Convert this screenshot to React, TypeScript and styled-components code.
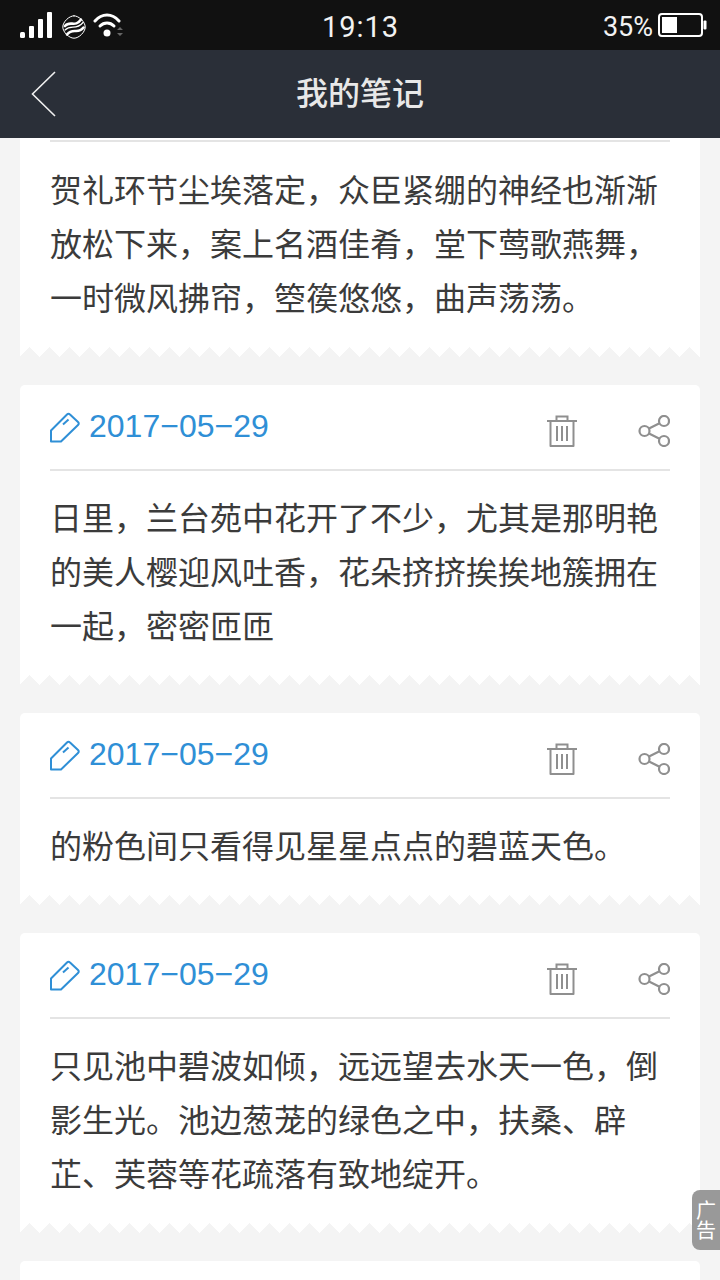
import React from 'react';
import styled, { createGlobalStyle } from 'styled-components';

const GlobalStyle = createGlobalStyle`
  html, body {
    margin: 0;
    padding: 0;
    background: #f4f4f4;
  }
`;

const Page = styled.div`
  position: relative;
  width: 720px;
  height: 1280px;
  overflow: hidden;
  display: flex;
  flex-direction: column;
  background: #f4f4f4;
  font-family: "Noto Sans CJK SC", "Noto Sans", sans-serif;
`;

const StatusBar = styled.div`
  height: 50px;
  flex-shrink: 0;
  display: grid;
  grid-template-columns: 1fr auto 1fr;
  align-items: center;
  padding: 0 13px 0 20px;
  background: #111111;
  color: #f2f2f2;
`;

const StatusLeft = styled.div`
  display: flex;
  align-items: center;
  gap: 9px;
`;

const CarrierSlot = styled.div`
  display: flex;
  margin: 3px -2px 0 0;
`;

const Clock = styled.div`
  padding: 3px 6px 0 0;
  font-family: Roboto, "Liberation Sans", sans-serif;
  font-size: 29px;
  letter-spacing: 1px;
`;

const StatusRight = styled.div`
  display: flex;
  align-items: center;
  justify-content: flex-end;
  gap: 5px;
  font-family: Roboto, "Liberation Sans", sans-serif;
  font-size: 27px;
`;

const Percent = styled.span`
  padding-top: 3px;
`;

const Header = styled.header`
  height: 88px;
  flex-shrink: 0;
  display: flex;
  align-items: center;
  justify-content: center;
  position: relative;
  box-sizing: border-box;
  padding-bottom: 6px;
  background: #2a2f38;
`;

const BackButton = styled.svg`
  position: absolute;
  left: 31px;
  top: 21px;
`;

const Title = styled.h1`
  margin: 0;
  font-size: 32px;
  font-weight: 500;
  color: #e8e8e8;
`;

const List = styled.main`
  display: flex;
  flex-direction: column;
  gap: 28px;
  padding: 0 20px;
`;

const Card = styled.section<{ $clipped?: boolean }>`
  position: relative;
  padding: ${(p) => (p.$clipped ? '2px' : '0')} 30px 33px;
  background: #ffffff;
  border-radius: ${(p) => (p.$clipped ? '0' : '5px 5px 0 0')};

  &::after {
    content: '';
    position: absolute;
    left: 0;
    right: 0;
    bottom: 0;
    height: 10px;
    background:
      linear-gradient(45deg, #f4f4f4 25%, transparent 25%) 10px 100% / 20px 20px repeat-x,
      linear-gradient(-45deg, #f4f4f4 25%, transparent 25%) 10px 100% / 20px 20px repeat-x;
  }
`;

const CardHead = styled.div`
  height: 84px;
  display: flex;
  align-items: center;
  justify-content: space-between;
`;

const DateWrap = styled.div`
  display: flex;
  align-items: center;
  gap: 9px;
  font-family: "Liberation Sans", Arial, sans-serif;
  font-size: 32px;
  color: #2f8fd6;
`;

const DateText = styled.span`
  margin-top: -2px;
`;

const Actions = styled.div`
  display: flex;
  align-items: center;
  gap: 60px;
  margin-top: 8px;
`;

const Divider = styled.div`
  height: 2px;
  background: #e4e4e4;
`;

const Body = styled.p<{ $first?: boolean }>`
  margin: ${(p) => (p.$first ? '19px' : '18px')} 0 0;
  padding-bottom: 1px;
  font-size: 32px;
  line-height: 54px;
  color: #3b3b3b;
  white-space: pre-line;
`;

const AdTab = styled.div`
  position: absolute;
  right: 0;
  top: 1190px;
  width: 28px;
  height: 60px;
  display: flex;
  align-items: center;
  justify-content: center;
  text-align: center;
  font-size: 20px;
  line-height: 20px;
  color: #ffffff;
  background: #999999;
  border-radius: 8px 0 0 8px;
`;

const SignalIcon = () => (
  <svg width="33" height="28" viewBox="0 0 33 28" fill="#fff">
    <rect x="0" y="21" width="5" height="6" rx="1.5" />
    <rect x="9" y="15" width="5" height="12" rx="1" />
    <rect x="18" y="8" width="5" height="19" rx="1" />
    <rect x="27" y="1" width="5" height="26" rx="1" />
  </svg>
);

const CarrierIcon = () => (
  <svg width="24" height="24" viewBox="0 0 24 24" fill="none" stroke="#fff" strokeLinecap="round">
    <path d="M12 .8 C17 .8 23.2 7 23.2 12 C23.2 17 17 23.2 12 23.2 C7 23.2 .8 17 .8 12 C.8 7 7 .8 12 .8 Z" strokeWidth="1" />
    <path d="M3 11 C8 5 13 13 19 4.5" strokeWidth="2.6" />
    <path d="M3 15 C9 9 14 16 21 7.5" strokeWidth="1.2" />
    <path d="M5 19.5 C11 12 16 20 21.5 12.5" strokeWidth="2.6" />
  </svg>
);

const WifiIcon = () => (
  <svg width="31" height="25" viewBox="0 0 31 25" fill="none" stroke="#fff" strokeWidth="3" strokeLinecap="round">
    <path d="M2 8 C9 0 19 0 26 8" />
    <path d="M7 13 C11 9 17 9 21 13" />
    <circle cx="14" cy="20" r="3.5" fill="#fff" stroke="none" />
    <path d="M24 17 L27 14 L30 17 Z M24 20 H30 L27 23 Z" fill="#666" stroke="none" />
  </svg>
);

const BatteryIcon = () => (
  <svg width="49" height="24" viewBox="0 0 49 24">
    <rect x="1" y="1" width="43" height="22" rx="3" fill="none" stroke="#fff" strokeWidth="2" />
    <rect x="4" y="4" width="15" height="16" fill="#fff" />
    <rect x="45.5" y="7.5" width="3" height="9" rx="1" fill="#fff" />
  </svg>
);

const PencilIcon = () => (
  <svg width="30" height="31" viewBox="0 0 30 31" fill="none" stroke="#2f8fd6" strokeWidth="2" strokeLinejoin="round">
    <path d="M1 29.5 V18.5 L17 2.5 Q18.5 1 20 2.5 L28 10 Q29.5 11.5 28 13 L11 29.5 Z" />
    <path d="M13 12.5 L18.5 7.5" />
  </svg>
);

const TrashIcon = () => (
  <svg width="32" height="33" viewBox="0 0 32 33" fill="none" stroke="#8f8f8f" strokeWidth="2">
    <path d="M1 6 H31" />
    <path d="M10.5 6 V1.5 H21.5 V6" />
    <path d="M4.5 6 V31 H27.5 V6" strokeLinejoin="round" />
    <path d="M11 11 V26 M16 11 V26 M21 11 V26" />
  </svg>
);

const ShareIcon = () => (
  <svg width="32" height="32" viewBox="0 0 32 32" fill="none" stroke="#8f8f8f" strokeWidth="2.2">
    <circle cx="6.5" cy="16" r="5" />
    <circle cx="26" cy="6" r="5" />
    <circle cx="26" cy="26" r="5" />
    <path d="M11 13.6 L21.5 8.3 M11 18.4 L21.5 23.7" />
  </svg>
);

const notes = [
  '日里，兰台苑中花开了不少，尤其是那明艳\n的美人樱迎风吐香，花朵挤挤挨挨地簇拥在\n一起，密密匝匝',
  '的粉色间只看得见星星点点的碧蓝天色。',
  '只见池中碧波如倾，远远望去水天一色，倒\n影生光。池边葱茏的绿色之中，扶桑、辟\n芷、芙蓉等花疏落有致地绽开。',
];

const App: React.FC = () => {
  return (
    <Page>
      <GlobalStyle />
      <StatusBar>
        <StatusLeft>
          <SignalIcon />
          <CarrierSlot>
            <CarrierIcon />
          </CarrierSlot>
          <WifiIcon />
        </StatusLeft>
        <Clock>19:13</Clock>
        <StatusRight>
          <Percent>35%</Percent>
          <BatteryIcon />
        </StatusRight>
      </StatusBar>
      <Header>
        <BackButton width="26" height="46" viewBox="0 0 26 46" fill="none" stroke="#f0f0f0" strokeWidth="1.6">
          <path d="M24 1 L1.5 23 L24 45" />
        </BackButton>
        <Title>我的笔记</Title>
      </Header>
      <List>
        <Card $clipped>
          <Divider />
          <Body $first>{'贺礼环节尘埃落定，众臣紧绷的神经也渐渐\n放松下来，案上名酒佳肴，堂下莺歌燕舞，\n一时微风拂帘，箜篌悠悠，曲声荡荡。'}</Body>
        </Card>
        {notes.map((text, i) => (
          <Card key={i}>
            <CardHead>
              <DateWrap>
                <PencilIcon />
                <DateText>2017−05−29</DateText>
              </DateWrap>
              <Actions>
                <TrashIcon />
                <ShareIcon />
              </Actions>
            </CardHead>
            <Divider />
            <Body>{text}</Body>
          </Card>
        ))}
        <Card />
      </List>
      <AdTab>广告</AdTab>
    </Page>
  );
};

export default App;
